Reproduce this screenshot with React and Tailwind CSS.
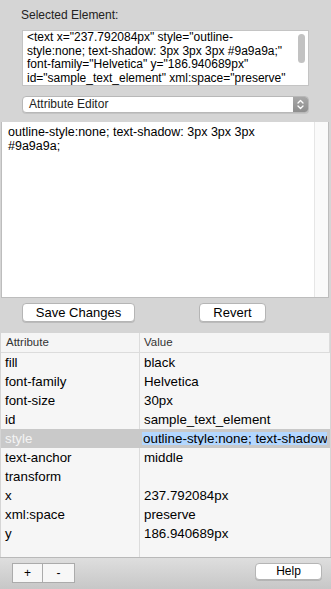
import React from 'react';

const rows = [
  ['fill', 'black'],
  ['font-family', 'Helvetica'],
  ['font-size', '30px'],
  ['id', 'sample_text_element'],
  ['style', 'outline-style:none; text-shadow: 3px 3px 3px #9a9a9a;'],
  ['text-anchor', 'middle'],
  ['transform', ''],
  ['x', '237.792084px'],
  ['xml:space', 'preserve'],
  ['y', '186.940689px'],
];

function App() {
  return (
    <div className="w-[331px] h-[589px] bg-[#d5d5d5] flex flex-col overflow-hidden text-black font-['Liberation_Sans',Arial,sans-serif]">
      <div className="pl-[21px] pt-[8px] h-[30px] text-[12px] leading-[15px] text-[#222]">Selected Element:</div>

      <div className="mx-[22px] h-[56px] bg-white border border-[#c4c4c4] flex">
        <div className="flex-1 pl-[4px] text-[12px] leading-[13.5px] overflow-hidden whitespace-nowrap">
          <div>&lt;text x="237.792084px" style="outline-</div>
          <div>style:none; text-shadow: 3px 3px 3px #9a9a9a;"</div>
          <div>font-family="Helvetica" y="186.940689px"</div>
          <div>id="sample_text_element" xml:space="preserve"</div>
        </div>
        <div className="w-[14px] flex justify-center pt-[3px]">
          <div className="w-[7px] h-[29px] rounded-full bg-[#c2c2c2]" />
        </div>
      </div>

      <div className="mx-[22px] mt-[10px] h-[17px] flex rounded-[4px] border border-[#b8b8b8] bg-white overflow-hidden shadow-[0_1px_0_rgba(0,0,0,0.08)]">
        <div className="flex-1 pl-[6px] text-[12px] leading-[15px] text-[#222]">Attribute Editor</div>
        <div className="w-[15px] bg-gradient-to-b from-[#a8a8a8] to-[#8e8e8e] flex items-center justify-center">
          <svg width="7" height="11" viewBox="0 0 7 11" fill="none" stroke="white" strokeWidth="1.3" strokeLinecap="round" strokeLinejoin="round">
            <path d="M1 4 L3.5 1.5 L6 4" />
            <path d="M1 7 L3.5 9.5 L6 7" />
          </svg>
        </div>
      </div>

      <div className="mt-[9px] ml-[1px] mr-[2px] h-[176px] bg-white border-l border-b border-r border-[#bdbdbd] flex">
        <div className="flex-1 pl-[6px] pt-[3px] text-[12.5px] leading-[14px]">
          <div>outline-style:none; text-shadow: 3px 3px 3px</div>
          <div>#9a9a9a;</div>
        </div>
        <div className="w-[14px] bg-[#fafafa] border-l border-[#e6e6e6]" />
      </div>

      <div className="mt-[5px] h-[20px] flex">
        <button className="ml-[22px] w-[113px] h-[19px] rounded-[4px] bg-white border border-[#b5b5b5] text-[13px] leading-[16px] shadow-[0_1px_0_rgba(0,0,0,0.12)]">Save Changes</button>
        <button className="ml-[64px] w-[67px] h-[19px] rounded-[4px] bg-white border border-[#b5b5b5] text-[13px] leading-[16px] shadow-[0_1px_0_rgba(0,0,0,0.12)]">Revert</button>
      </div>

      <div className="mt-[10px] mx-[1px] flex-1 bg-[#f6f6f6] flex flex-col">
        <div className="h-[20px] flex border-b border-[#dcdcdc] bg-[#f5f5f5] text-[11.5px] leading-[19px] text-[#333]">
          <div className="w-[139px] pl-[5px] border-r border-[#dcdcdc]">Attribute</div>
          <div className="flex-1 pl-[4px] border-r border-[#dcdcdc]">Value</div>
        </div>
        <div className="flex-1 flex">
          <div className="w-[139px] border-r border-[#dcdcdc] flex flex-col">
            {rows.map(([k], i) => (
              <div
                key={k}
                className={
                  i === 4
                    ? 'h-[19px] pl-[4px] text-[13.3px] leading-[19px] bg-[#c9c9c9] text-[#f4f4f4]'
                    : 'h-[19px] pl-[4px] text-[13.3px] leading-[19px]'
                }
              >
                {k}
              </div>
            ))}
          </div>
          <div className="flex-1 flex flex-col min-w-0">
            {rows.map(([k, v], i) =>
              i === 4 ? (
                <div key={k} className="h-[19px] -ml-[1px] border-[3px] border-[#c9c9c9] bg-[#b3d7ff] overflow-hidden whitespace-nowrap">
                  <div className="pl-[1px] text-[13.4px] leading-[13px]">{v}</div>
                </div>
              ) : (
                <div key={k} className="h-[19px] pl-[4px] text-[13.3px] leading-[19px] whitespace-nowrap overflow-hidden">
                  {v}
                </div>
              )
            )}
          </div>
        </div>
      </div>

      <div className="h-[32px] border-t border-[#b9b9b9] bg-gradient-to-b from-[#dedede] to-[#c7c7c7] flex items-start pt-[5px]">
        <div className="ml-[12px] w-[31px] h-[20px] bg-[#f7f7f7] border border-[#ababab] flex items-center justify-center text-[12px]">+</div>
        <div className="w-[32px] h-[20px] bg-[#f7f7f7] border border-l-0 border-[#ababab] flex items-center justify-center text-[12px]">-</div>
        <div className="flex-1" />
        <button className="mr-[9px] w-[67px] h-[17px] rounded-[4px] bg-white border border-[#b5b5b5] text-[12px] leading-[15px] shadow-[0_1px_0_rgba(0,0,0,0.12)]">Help</button>
      </div>
    </div>
  );
}

export default App;
